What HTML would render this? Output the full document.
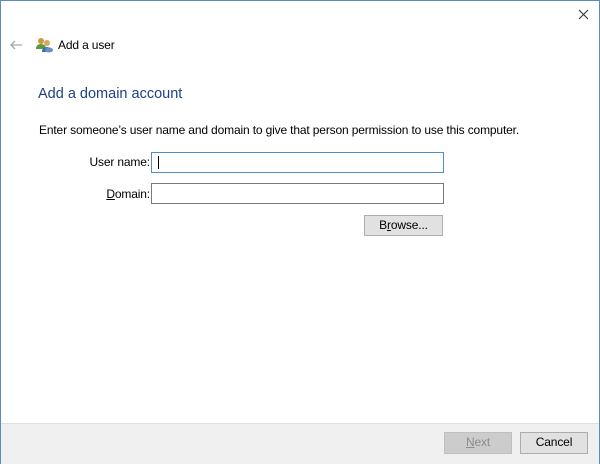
<!DOCTYPE html><html><head><style>
body{margin:0;width:600px;height:464px;overflow:hidden;font-family:"Liberation Sans",sans-serif;font-size:12px;color:#000;letter-spacing:-0.15px}
.win{position:absolute;left:0;top:0;width:598px;height:462px;border:1px solid #5b8db8;background:#fff;}
.t{position:absolute;white-space:nowrap}
.in{position:absolute;background:#fff;border:1px solid #7a7a7a;box-sizing:border-box}
.btn{position:absolute;background:#e1e1e1;border:1px solid #adadad;box-sizing:border-box;text-align:center;line-height:19px}
</style></head><body><div class="win">
<svg style="position:absolute;left:577px;top:8px" width="11" height="11"><path d="M1 1L10 10M10 1L1 10" stroke="#333" stroke-width="1.1"/></svg>
<svg style="position:absolute;left:8px;top:38px" width="14" height="12"><path d="M13 6H2M6 2L2 6l4 4" stroke="#a8a8a8" stroke-width="1.3" fill="none"/></svg>
<svg style="position:absolute;left:35px;top:36px" width="18" height="16"><circle cx="5" cy="4" r="3" fill="#c89a3a"/><path d="M0 12q0-5 5-5t5 5z" fill="#5a9a3a"/><circle cx="11" cy="6" r="3" fill="#d9a85a"/><path d="M6 15q0-5 5-5t5 5z" fill="#3a6ea8"/><ellipse cx="13" cy="13" rx="4" ry="2.5" fill="#6a8fc0"/></svg>
<div class="t" style="left:57px;top:37px;font-size:12px">Add a user</div>
<div class="t" style="left:37px;top:85px;font-size:14.5px;color:#1e3f8a;letter-spacing:0">Add a domain account</div>
<div class="t" style="left:38px;top:122px">Enter someone’s user name and domain to give that person permission to use this computer.</div>
<div class="t" style="right:449px;top:154px">User name:</div>
<div class="in" style="left:150px;top:151px;width:293px;height:21px;border-color:#4f8ec7"><div style="position:absolute;left:6px;top:3px;width:1px;height:13px;background:#000"></div></div>
<div class="t" style="right:449px;top:186px"><u>D</u>omain:</div>
<div class="in" style="left:150px;top:182px;width:293px;height:21px"></div>
<div class="btn" style="left:363px;top:214px;width:79px;height:21px">B<u>r</u>owse...</div>
<div style="position:absolute;left:0;top:422px;width:598px;height:40px;background:#f0f0f0;border-top:1px solid #dfdfdf"></div>
<div class="btn" style="left:443px;top:431px;width:68px;height:22px;color:#8d8d8d;background:#ccc;border-color:#bfbfbf"><u>N</u>ext</div>
<div class="btn" style="left:519px;top:431px;width:68px;height:22px">Cancel</div>
</div></body></html>
